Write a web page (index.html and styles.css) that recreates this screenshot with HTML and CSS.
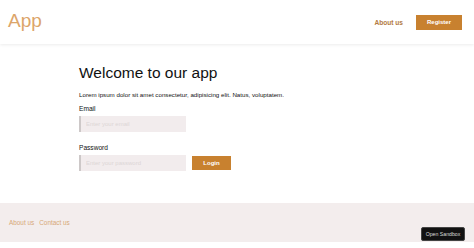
FILE: index.html
```html
<!DOCTYPE html>
<html lang="en">
<head>
  <meta charset="UTF-8">
  <title>App</title>
  <link rel="stylesheet" href="styles.css">
</head>
<body>
  <header class="topbar">
    <div class="logo">App</div>
    <nav class="nav">
      <a class="nav-link" href="#">About us</a>
      <button class="btn register-btn">Register</button>
    </nav>
  </header>

  <main class="content">
    <h1 class="title">Welcome to our app</h1>
    <p class="lead">Lorem ipsum dolor sit amet consectetur, adipisicing elit. Natus, voluptatem.</p>
    <form class="login-form" onsubmit="return false;">
      <label class="field-label" for="email">Email</label>
      <div class="field-row">
        <input class="field" type="text" id="email" placeholder="Enter your email">
      </div>
      <label class="field-label" for="password">Password</label>
      <div class="field-row">
        <input class="field" type="password" id="password" placeholder="Enter your password">
        <button class="btn login-btn">Login</button>
      </div>
    </form>
  </main>

  <footer class="footer">
    <a class="footer-link" href="#">About us</a>
    <a class="footer-link" href="#">Contact us</a>
  </footer>

  <button class="sandbox-btn">Open Sandbox</button>
</body>
</html>
```

FILE: styles.css
```css
body {
  margin: 0;
  font-family: 'Liberation Sans', Arial, sans-serif;
  background: #fff;
  color: #111;
  position: relative;
  min-height: 248px;
}
.topbar {
  height: 44px;
  display: flex;
  align-items: center;
  justify-content: space-between;
  padding: 0 12px 0 8px;
  box-shadow: 0 1px 3px rgba(0,0,0,0.08);
}
.logo {
  font-size: 19px;
  color: #dca56a;
  margin-top: -2px;
}
.nav {
  display: flex;
  align-items: center;
  gap: 13px;
}
.nav-link {
  font-size: 6.6px;
  font-weight: bold;
  color: #b27a42;
  text-decoration: none;
}
.btn {
  border: none;
  font-family: inherit;
  font-weight: bold;
  color: #fff;
  background: #c8812f;
  cursor: pointer;
  padding: 0;
}
.register-btn {
  width: 46px;
  height: 15px;
  font-size: 6px;
}
.content {
  padding: 20px 0 32px 79px;
}
.title {
  margin: 0 0 9px 0;
  font-size: 15.5px;
  font-weight: normal;
}
.lead {
  margin: 0 0 7px 0;
  font-size: 6.2px;
}
.login-form {
  display: flex;
  flex-direction: column;
}
.field-label {
  font-size: 6.6px;
  margin-bottom: 4px;
}
.field-row {
  display: flex;
  align-items: center;
  gap: 6px;
  margin-bottom: 12px;
}
.field-row:last-child {
  margin-bottom: 0;
}
.field {
  width: 107px;
  height: 16px;
  box-sizing: border-box;
  border: none;
  border-left: 2px solid #cdc8c8;
  background: #f2eced;
  padding: 0 0 0 5px;
  font-family: inherit;
  font-size: 6px;
  outline: none;
}
.field::placeholder {
  color: #dcd6d6;
}
.login-btn {
  width: 39px;
  height: 14px;
  font-size: 6px;
}
.footer {
  background: #f3eded;
  height: 39px;
  display: flex;
  align-items: center;
  gap: 5px;
  padding-left: 9px;
}
.footer-link {
  font-size: 6.4px;
  color: #d7a878;
  text-decoration: none;
}
.sandbox-btn {
  position: absolute;
  right: 9px;
  bottom: 7px;
  width: 44px;
  height: 14px;
  padding: 0;
  border: 1px solid #444;
  border-radius: 2px;
  background: #111;
  color: #ddd;
  font-family: inherit;
  font-size: 5.2px;
}
```
